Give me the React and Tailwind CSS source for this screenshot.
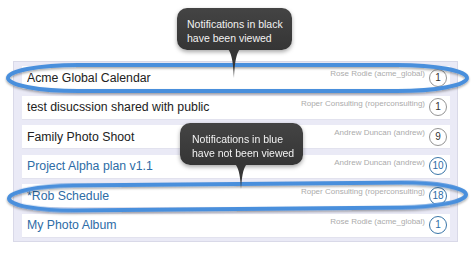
import React from 'react';

const rows = [
  { title: 'Acme Global Calendar', owner: 'Rose Rodie (acme_global)', count: 1, unread: false },
  { title: 'test disucssion shared with public', owner: 'Roper Consulting (roperconsulting)', count: 1, unread: false },
  { title: 'Family Photo Shoot', owner: 'Andrew Duncan (andrew)', count: 9, unread: false },
  { title: 'Project Alpha plan v1.1', owner: 'Andrew Duncan (andrew)', count: 10, unread: true },
  { title: '*Rob Schedule', owner: 'Roper Consulting (roperconsulting)', count: 18, unread: true },
  { title: 'My Photo Album', owner: 'Rose Rodie (acme_global)', count: 1, unread: true },
];

const Row = ({ row }) => (
  <div className="h-[24px] bg-white border-b border-[#e2e2ee] flex items-center pl-[5px] pr-[3px]">
    <span
      className={`flex-1 truncate text-[12.3px] leading-[16px] ${
        row.unread ? 'text-[#2d6ca6]' : 'text-[#222]'
      }`}
    >
      {row.title}
    </span>
    <span className="self-start mt-[3px] mr-[4px] text-[8px] leading-[10px] text-[#ababab]">
      {row.owner}
    </span>
    <span
      className={`w-[18px] h-[18px] rounded-full border flex items-center justify-center text-[10px] leading-none ${
        row.unread ? 'border-[#3a76a8] text-[#2d6ca6]' : 'border-[#959595] text-[#333]'
      }`}
    >
      {row.count}
    </span>
  </div>
);

const Callout = ({ className, pointerClass, lines }) => (
  <div
    className={`absolute rounded-[10px] bg-gradient-to-b from-[#444] to-[#353535] text-[#f2f2f2] text-[10.5px] leading-[14px] pt-[9px] shadow-[0_2px_4px_rgba(0,0,0,0.35)] ${className}`}
  >
    {lines.map((l) => (
      <div key={l} className="whitespace-nowrap">{l}</div>
    ))}
    <svg className={`absolute ${pointerClass}`} viewBox="0 0 12 30" preserveAspectRatio="none">
      <path d="M0 0 C3 4 5 10 6 30 C7 10 9 4 12 0 Z" fill="#363636" />
    </svg>
  </div>
);

export default function App() {
  return (
    <div className="relative w-[474px] h-[253px] bg-white overflow-hidden font-['Liberation_Sans',Arial,sans-serif]">
      <div className="ml-[13px] mt-[61px] w-[445px] bg-[#eaeaf6] border border-[#d9d9e8] pl-[8px] pr-[7px] pt-[4px] pb-[3px] flex flex-col gap-[5.6px]">
        {rows.map((r) => (
          <Row key={r.title} row={r} />
        ))}
      </div>

      {/* highlight ovals */}
      <svg className="absolute left-0 top-0 w-[474px] h-[253px] pointer-events-none" viewBox="0 0 474 253">
        <defs>
          <filter id="sh" x="-5%" y="-50%" width="110%" height="200%">
            <feDropShadow dx="0" dy="1.5" stdDeviation="1.2" floodColor="#000" floodOpacity="0.35" />
          </filter>
        </defs>
        <g filter="url(#sh)" fill="none" stroke="#4a8fdc" strokeWidth="4">
          <rect x="8" y="65" width="459" height="26" rx="70" ry="13" />
          <rect x="9" y="184" width="457" height="25" rx="65" ry="12.5" transform="rotate(-0.5 237.5 196)" />
        </g>
      </svg>

      <Callout
        className="left-[177px] top-[8px] w-[115px] h-[42px] pl-[10px]"
        pointerClass="left-[51px] top-[41px] w-[12px] h-[29px]"
        lines={['Notifications in black', 'have been viewed']}
      />
      <Callout
        className="left-[180px] top-[123px] w-[123px] h-[42px] pl-[12px]"
        pointerClass="left-[55px] top-[41px] w-[12px] h-[25px]"
        lines={['Notifications in blue', 'have not been viewed']}
      />
    </div>
  );
}
